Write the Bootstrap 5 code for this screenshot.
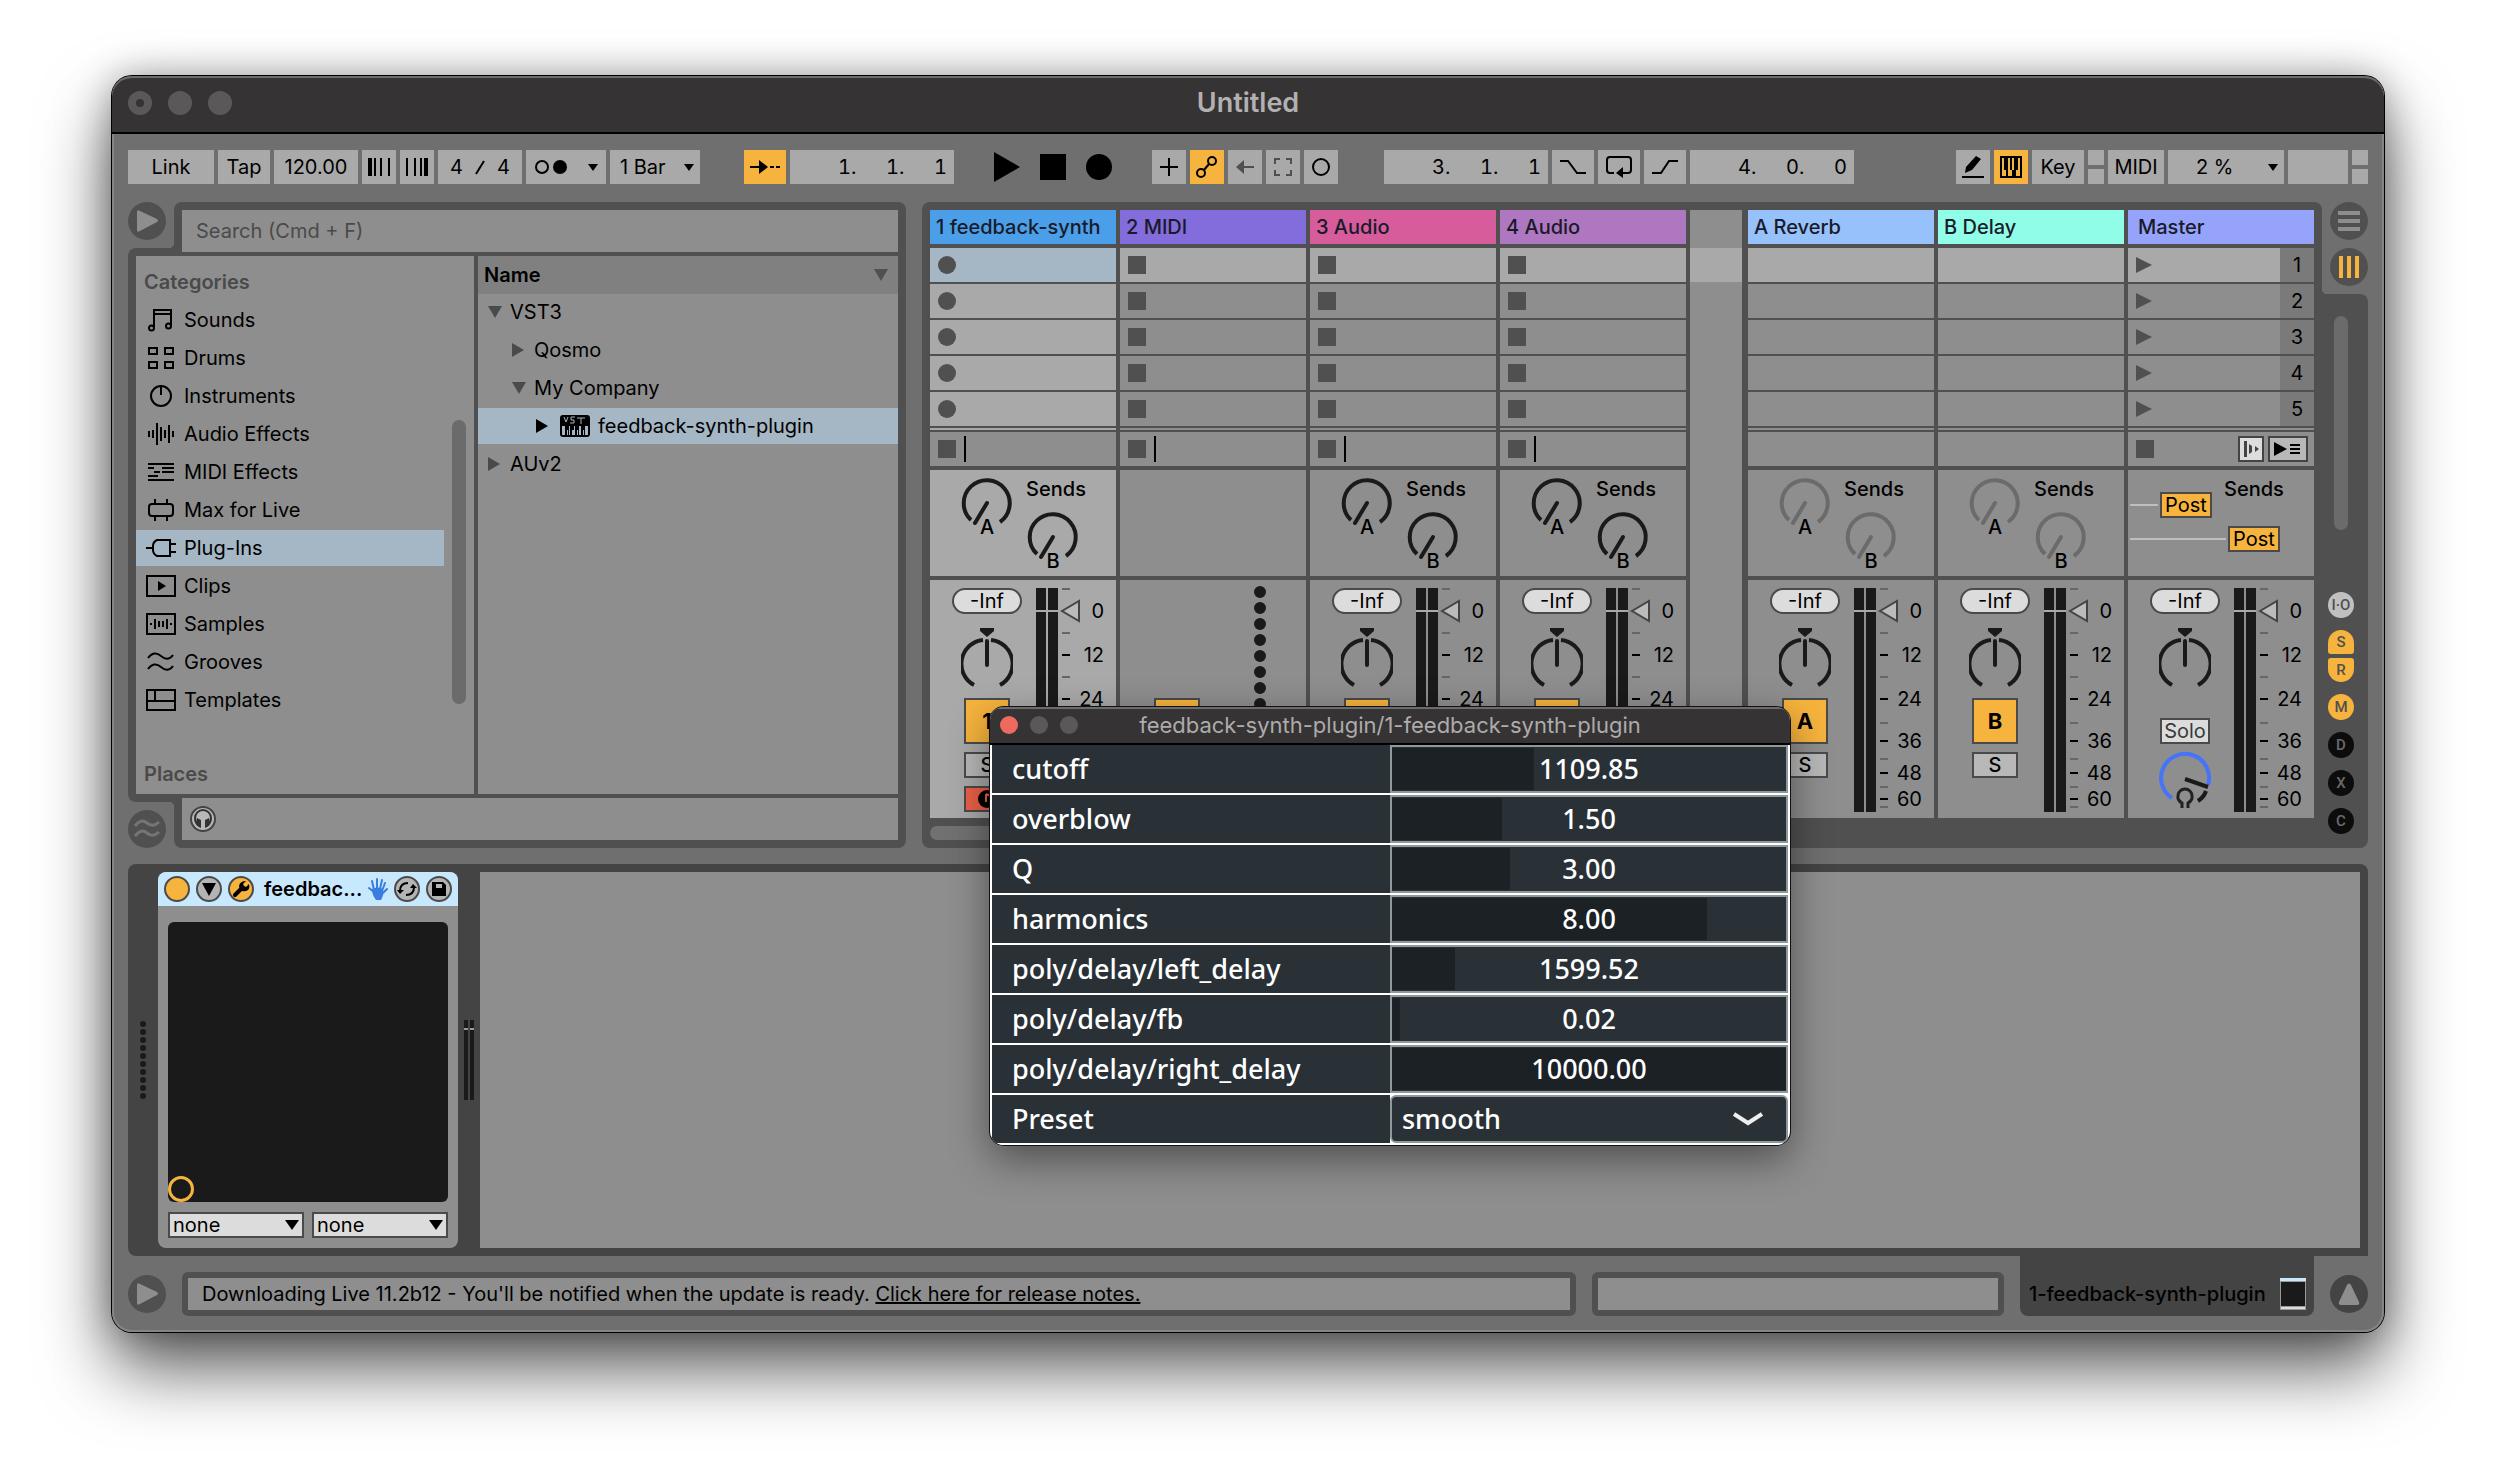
<!DOCTYPE html>
<html lang="en">
<head>
<meta charset="utf-8">
<meta name="viewport" content="width=device-width, initial-scale=1">
<title>Untitled</title>
<link href="https://cdn.jsdelivr.net/npm/bootstrap@5.3.0/dist/css/bootstrap.min.css" rel="stylesheet">
<style>
:root{--chrome:#6f6f6f;--edge:#505050;--edge2:#444;--pane:#8e8e8e;--lite:#a9a9a9;--sel:#a5b6c4;--amber:#f6b33d;--ink:#1a1a1a}
body{background:#fff;font-family:Inter,"Liberation Sans",sans-serif;font-size:20px;line-height:24px;color:#000}
svg{display:block;flex:none}
button,input,select{font:inherit;color:inherit;border:0;border-radius:0;padding:0;appearance:none;background:none;min-width:0}
.stage{padding:76px 112px 148px}
.daw{background:var(--chrome);border-radius:20px;box-shadow:inset 0 0 0 2px #858585,0 0 0 1px #000,0 36px 70px rgba(0,0,0,.65),0 0 36px rgba(0,0,0,.3)}
.titlebar{height:58px;background:#363334;border-bottom:2px solid #000;border-radius:20px 20px 0 0;padding:0 16px 2px;box-shadow:inset 0 2px 0 #6c6c6a;color:#b3b0b1;font-size:27px;font-weight:600;display:grid;grid-template-columns:1fr auto 1fr;align-items:center}
.light{width:24px;height:24px;border-radius:50%;background:#5b5859;display:grid;place-items:center}
.light i{width:8px;height:8px;border-radius:50%;background:#363334}
.toolbar{padding:16px 16px 18px}
.tool{height:34px;background:var(--lite);display:flex;align-items:center;justify-content:center;flex:none}
.hot,.rnd.hot{background:var(--amber)}
.w16{width:16px}.w34{width:34px}.w42{width:42px}.w52{width:52px}.w56{width:56px}.w60{width:60px}.w80{width:80px}.w84{width:84px}.w86{width:86px}.w90{width:90px}.w116{width:116px}
.posbox{width:164px;padding-left:48px;justify-content:flex-start;font-variant-numeric:tabular-nums}
.posbox input{width:48px}.posbox input:last-child{width:18px}
.pick{position:relative}.pick select{width:100%;height:100%;padding:0 10px}
.pick svg{position:absolute;right:6px;pointer-events:none}
.halves{width:16px;height:34px;display:flex;flex-direction:column;gap:4px}.halves i{flex:1;background:var(--lite)}
.disc{width:38px;height:38px;border-radius:50%;background:var(--edge);display:grid;place-items:center}
.browser{width:778px;flex:none}
.sidecell{width:46px;height:46px;flex:none}
.sidecell.top{background:radial-gradient(circle at 0 0,transparent 6px,var(--edge) 7px) 100% 100%/6px 6px no-repeat}
.sidecell.bottom{padding-top:8px;background:radial-gradient(circle at 0 100%,transparent 6px,var(--edge) 7px) 100% 0/6px 6px no-repeat}
.searchwrap{height:46px;padding:8px 8px 0;background:var(--edge);border-radius:8px 8px 0 0}
.searchwrap input{display:block;width:100%;height:42px;background:var(--pane);padding:0 14px;position:relative}
.searchwrap input::placeholder{color:#4a4a4a;opacity:1}
.lists{background:var(--edge);padding:8px;gap:4px;border-radius:8px 0 0 8px}
.cats{width:338px;background:var(--pane);padding:6px 8px 0 0;height:538px}
.head2{color:#4a4a4a;font-weight:600;height:40px;padding-left:8px;display:flex;align-items:center}
.cat{width:308px;height:36px;margin-bottom:2px;padding-left:10px;gap:8px;display:flex;align-items:center;color:#000;text-decoration:none}
.cat.on,.leaf.on{background:var(--sel)}
.cat svg{fill:none;stroke:#000;stroke-width:2}
.vbar{width:14px;border-radius:7px;background:#6b6b6b}
.tree{background:var(--pane)}
.treehead{height:38px;background:#808080;padding:0 10px 0 6px;font-weight:600}
.leaf{height:36px;margin-bottom:2px;display:flex;align-items:center;gap:8px}
.preview{height:46px;background:var(--edge);padding:0 8px 8px;border-radius:0 0 8px 8px}
.preview div{height:42px;margin-top:-4px;background:var(--pane);position:relative;padding:0 8px;display:flex;align-items:center}
.session{background:var(--edge);border-radius:8px 8px 0 8px;padding:8px}
.trk{width:186px;flex:none;display:flex;flex-direction:column}
.thead{height:34px;margin-bottom:4px;padding-left:6px;font-weight:500;color:#1a1a2a;display:flex;align-items:center;white-space:nowrap}
.slot{height:34px;margin-bottom:2px;background:var(--pane);padding-left:8px;display:flex;align-items:center;width:100%}
.slot.lit{background:var(--lite)}.slot.picked{background:var(--sel)}
.sliver{height:2px;margin-bottom:2px;background:var(--pane)}
.stopsq{width:18px;height:18px;background:var(--edge)}.stopsq.dot{border-radius:50%}
.statusline{width:2px;height:26px;background:#000;margin-left:8px}
.sends{height:106px;margin:4px 0;background:var(--pane);display:flex;padding:7px 0 0 31px;gap:9px;font-weight:500}
.trk>.slot.last{margin-bottom:0}
.mixer{height:238px;background:var(--pane);display:flex;padding-left:22px}
.strip{width:70px;display:flex;flex-direction:column;align-items:center;padding-top:8px}
.armed .sends,.armed .mixer,.armed .slot.free,.armed .sliver{background:var(--lite)}
.pill{width:70px;height:26px;border:2px solid #4a4a4a;border-radius:13px;background:#dcdcdc;text-align:center;line-height:22px;margin-bottom:12px}
.sq{width:46px;height:26px;border:2px solid #4a4a4a;background:#b8b8b8;margin-top:8px;line-height:22px;font-weight:500;display:grid;place-items:center}
.sq.big{height:46px;background:var(--amber);font-weight:700;font-size:22px}
.sq.rec{background:#ec6048}
.sq.solo{width:50px;margin-top:28px;background:#dcdcdc;color:#3a3a3a;font-weight:400}
.post{border:2px solid #4a4a4a;background:var(--amber);height:26px;width:52px;line-height:22px;font-weight:400}
.wire{height:2px;background:#bebebe}
.scene{width:34px;height:34px;background:#7a7a7a;display:grid;place-items:center}
.hbar{height:14px;width:756px;margin-top:8px;border-radius:7px;background:#717171}
.rightcol{width:46px;flex:none}
.notch{height:92px;padding-left:8px;gap:8px;background:radial-gradient(circle at 100% 0,transparent 6px,var(--edge) 7px) 0 100%/6px 6px no-repeat}
.railbox{background:var(--edge);border-radius:0 8px 8px 0;padding:22px 0 0 6px}
.railbar{height:214px;margin:0 0 62px 6px}
.tog{width:26px;height:26px;border-radius:50%;margin-bottom:12px;font:500 15px/15px Roboto,sans-serif;background:#0c0c0c;color:#6a6a6a;display:grid;place-items:center}
.tog.am{background:var(--amber);color:#505050}
.tog.half1{height:24px;border-radius:13px 13px 3px 3px;margin-bottom:4px}.tog.half2{height:24px;border-radius:3px 3px 13px 13px}
.devices{margin:16px 16px 0;background:var(--edge2);border-radius:8px 8px 0 8px;padding:8px;height:392px}
.gutter{width:22px}
.dev{width:300px;background:var(--pane);border-radius:8px;overflow:hidden}
.devhead{height:34px;background:#c8e8fe;padding:0 6px;gap:6px;font-weight:600}
.rnd{width:26px;height:26px;border-radius:50%;border:2px solid #4a4a4a;background:#b4b4b4;display:grid;place-items:center;flex:none}
.pad{width:280px;height:280px;margin:16px 10px 10px;background:var(--ink);border-radius:6px;display:flex;align-items:flex-end}
.pad i{width:26px;height:26px;border:3px solid var(--amber);border-radius:50%}
.minis{padding:0 10px}
.mini{width:136px;height:26px;border:2px solid #4a4a4a;background:#dcdcdc;display:flex;align-items:center}
.mini select{padding:0 3px;line-height:20px}.mini svg{right:3px}
.foot{padding:0 16px 16px}
.msg{margin-top:16px;height:44px;border:6px solid var(--edge);border-radius:6px;background:var(--pane);padding:0 14px;display:flex;align-items:center;white-space:pre}
.msg a{color:#000}
.msg.side{width:412px}
.tab{width:294px;height:60px;background:var(--edge2);border-radius:0 0 8px 8px;padding:16px 8px 0 9px;font-weight:500}
.plug{position:absolute;left:878px;top:631px;width:800px;border-radius:14px;overflow:hidden;background:#fff;box-shadow:0 0 0 1px #111,0 14px 40px rgba(0,0,0,.45);font-family:"Noto Sans","Open Sans",sans-serif;font-size:27px;font-weight:500;color:#fff}
.plughead{height:38px;background:#363334;border-bottom:2px solid #000;box-shadow:inset 0 2px 0 #6c6c6a;padding:0 10px;color:#adabac;font:22px/26px Inter,sans-serif;display:grid;grid-template-columns:1fr auto 1fr;align-items:center}
.plughead .light{width:18px;height:18px}
.prow{height:50px;padding:0 2px;border-bottom:2px solid #fff}
.prow>label{width:50%;background:#293137;padding-left:20px;display:flex;align-items:center;height:48px}
.val{width:50%;height:48px;position:relative;display:grid;place-items:center;border:2px solid #8f989b;background:#293137}
.val input{position:absolute;inset:1px 0;width:100%;height:42px;background:linear-gradient(#1c2125,#1c2125) 0 0/var(--p) 100% no-repeat}
.val input::-webkit-slider-thumb{appearance:none;width:1px;height:40px;background:none}
.val output{position:relative;pointer-events:none}
.val select{width:100%;height:44px;padding:0 10px}
.val.sel{border-radius:6px}.val.sel svg{position:absolute;right:22px;pointer-events:none}
</style>
</head>
<body>
<div class="stage">
<main class="daw position-relative">
  <header class="titlebar">
    <div class="d-flex gap-3"><span class="light"><i></i></span><span class="light"></span><span class="light"></span></div>
    <span>Untitled</span><span></span>
  </header>

  <div class="toolbar d-flex">
    <div class="d-flex gap-1">
      <button class="tool w86">Link</button><button class="tool w52">Tap</button>
      <input class="tool w84 text-center" value="120.00" aria-label="Tempo">
      <button class="tool w34" aria-label="Nudge down"><svg width="22" height="18"><path d="M0 0h4v18H0zM6 0h2v18H6zM12 0h2v18h-2zM20 0h2v18h-2z"/></svg></button>
      <button class="tool w34" aria-label="Nudge up"><svg width="22" height="18"><path d="M18 0h4v18h-4zM14 0h2v18h-2zM8 0h2v18H8zM0 0h2v18H0z"/></svg></button>
      <button class="tool w84 gap-2"><span>4</span><svg width="18" height="18"><path d="M13 3 5 16" stroke="#000" stroke-width="2"/></svg><span>4</span></button>
      <button class="tool w80" style="gap:20px" aria-label="Metronome"><svg width="34" height="18"><circle cx="8" cy="9" r="6" fill="none" stroke="#000" stroke-width="2"/><circle cx="26" cy="9" r="7"/></svg><svg width="10" height="8"><path d="M0 1h10L5 8z"/></svg></button>
      <div class="tool w90 pick"><select aria-label="Quantization"><option>1 Bar</option></select><svg width="10" height="8"><path d="M0 1h10L5 8z"/></svg></div>
    </div>
    <div class="d-flex gap-1" style="margin-left:44px">
      <button class="tool hot w42" aria-label="Follow"><svg width="30" height="18"><path d="M0 8h9V2l9 7-9 7v-6H0zM20 8h4v2h-4zM26 8h4v2h-4z"/></svg></button>
      <div class="tool posbox"><input value="1." aria-label="Bar"><input value="1." aria-label="Beat"><input value="1" aria-label="Sixteenth"></div>
    </div>
    <div class="d-flex mx-4 px-3 align-items-center" style="gap:20px">
      <button aria-label="Play"><svg width="26" height="30"><path d="M0 0l26 15L0 30z"/></svg></button>
      <button aria-label="Stop"><svg width="26" height="26"><path d="M0 0h26v26H0z"/></svg></button>
      <button aria-label="Record"><svg width="26" height="26"><circle cx="13" cy="13" r="13"/></svg></button>
    </div>
    <div class="d-flex gap-1">
      <button class="tool w34" aria-label="Overdub"><svg width="18" height="18"><path d="M8 0h2v8h8v2h-8v8H8v-8H0V8h8z"/></svg></button>
      <button class="tool hot w34" aria-label="Automation arm"><svg width="24" height="24" fill="none" stroke="#000" stroke-width="2"><circle cx="17" cy="6" r="4"/><circle cx="6" cy="18" r="4"/><path d="M9 15l5-6"/></svg></button>
      <button class="tool w34" aria-label="Re-enable automation"><svg width="18" height="14" fill="#505050"><path d="M0 7l8-7v6h10v2H8v6z"/></svg></button>
      <button class="tool w34" aria-label="Capture"><svg width="18" height="18" fill="none" stroke="#505050" stroke-width="2"><path d="M6 1H1v5M12 1h5v5M6 17H1v-5M12 17h5v-5"/></svg></button>
      <button class="tool w34" aria-label="Session record"><svg width="20" height="20"><circle cx="10" cy="10" r="8" fill="none" stroke="#000" stroke-width="2"/></svg></button>
    </div>
    <div class="d-flex gap-1" style="margin-left:46px">
      <div class="tool posbox"><input value="3." aria-label="Loop bar"><input value="1." aria-label="Loop beat"><input value="1" aria-label="Loop sixteenth"></div>
      <button class="tool w42" aria-label="Punch in"><svg width="26" height="16" fill="none" stroke="#000" stroke-width="2"><path d="M0 2h8l9 12h9"/></svg></button>
      <button class="tool w42" aria-label="Loop"><svg width="28" height="26" fill="none" stroke="#000" stroke-width="2"><path d="M9 19H5q-3 0-3-3V6q0-3 3-3h18q3 0 3 3v10q0 3-3 3h-5"/><path d="M18 13v11l-7-5z" fill="#000" stroke="none"/></svg></button>
      <button class="tool w42" aria-label="Punch out"><svg width="26" height="16" fill="none" stroke="#000" stroke-width="2"><path d="M0 14h9l8-12h9"/></svg></button>
      <div class="tool posbox"><input value="4." aria-label="Length bars"><input value="0." aria-label="Length beats"><input value="0" aria-label="Length sixteenths"></div>
    </div>
    <div class="d-flex gap-1 ms-auto">
      <button class="tool w34" aria-label="Draw"><svg width="22" height="22"><path d="M0 20h22v2H0zM3 17l1-6L14 0l5 3-9 11z"/></svg></button>
      <button class="tool hot w34" aria-label="Computer keyboard"><svg width="22" height="22"><path d="M0 0h22v22H0z"/><path d="M2 2h2v12h2v6H2zM8 2h2v12h2V2h2v12h-2v6h-4v-6H8zM18 2h2v18h-4v-6h2z" fill="#f6b33d"/><path d="M7 14h1v6H7zM14 14h1v6h-1z"/></svg></button>
      <button class="tool w52">Key</button><span class="halves"><i></i><i></i></span><button class="tool w56">MIDI</button>
      <div class="tool w116 pick"><select class="ps-4 ms-1" aria-label="CPU meter"><option>2 %</option></select><svg width="10" height="8"><path d="M0 1h10L5 8z"/></svg></div>
      <span class="tool w60"></span><span class="halves"><i></i><i></i></span>
    </div>
  </div>

  <div class="d-flex gap-3 px-3">
    <section class="browser">
      <div class="d-flex">
        <div class="sidecell top"><button class="disc" aria-label="Hide browser"><svg width="24" height="24"><path d="M2 3q0-3 3-1l17 8q2 2 0 3L5 22q-3 2-3-1z" fill="#8e8e8e"/></svg></button></div>
        <div class="searchwrap flex-fill"><input type="search" placeholder="Search (Cmd + F)" aria-label="Search"></div>
      </div>
      <div class="lists d-flex">
        <div class="cats d-flex">
          <nav class="d-flex flex-column h-100">
            <div class="head2">Categories</div>
            <a class="cat" href="#"><svg width="30" height="24"><path d="M8 19V2h17v15M8 6h17"/><circle cx="5.500" cy="20" r="2.500"/><circle cx="22.500" cy="18" r="2.500"/></svg>Sounds</a>
            <a class="cat" href="#"><svg width="30" height="24"><path d="M3 2h8v6H3zM19 2h8v6h-8zM3 16h8v6H3zM19 16h8v6h-8z"/></svg>Drums</a>
            <a class="cat" href="#"><svg width="30" height="24"><circle cx="15" cy="12" r="10"/><path d="M15 1v10"/></svg>Instruments</a>
            <a class="cat" href="#"><svg width="30" height="24"><path d="M3 9v6M7 8v8M11 1v22M15 5v14M19 8v8M23 3v18M27 9v6"/></svg>Audio Effects</a>
            <a class="cat" href="#"><svg width="30" height="24"><path d="M2 4h26M2 8h6M16 8h12M8 12h6M16 12h12M2 16h10M2 20h26"/></svg>MIDI Effects</a>
            <a class="cat" href="#"><svg width="30" height="24"><rect x="3" y="6" width="24" height="12" rx="3"/><path d="M9 1v5M21 1v5M9 18v5M21 18v5"/></svg>Max for Live</a>
            <a class="cat on" href="#"><svg width="30" height="24"><path d="M0 12h7M24 4H11Q7 6 7 10v4q0 4 4 6h13zM24 8h6M24 16h6"/></svg>Plug-Ins</a>
            <a class="cat" href="#"><svg width="30" height="24"><path d="M1 2h28v20H1z"/><path d="M12 7l8 5-8 5z" fill="#000" stroke="none"/></svg>Clips</a>
            <a class="cat" href="#"><svg width="30" height="24"><path d="M1 2h28v20H1zM5 11v2M9 7v10M13 9v6M17 9v6M21 7v10M25 11v2"/></svg>Samples</a>
            <a class="cat" href="#"><svg width="30" height="24"><path d="M2 8q6-8 13-2t12-1M2 19q6-8 13-2t12-1"/></svg>Grooves</a>
            <a class="cat" href="#"><svg width="30" height="24"><path d="M1 2h28v20H1zM1 13h28M9 2v11"/></svg>Templates</a>
            <div class="head2 mt-auto">Places</div>
          </nav>
          <div class="d-flex flex-column ms-2"><div class="vbar" style="height:284px;margin-top:158px"></div></div>
        </div>
        <div class="tree flex-fill">
          <div class="treehead d-flex align-items-center justify-content-between"><span>Name</span><svg width="14" height="12" fill="#505050"><path d="M0 0h14L7 12z"/></svg></div>
          <div class="leaf" style="padding-left:10px"><svg width="14" height="12" fill="#4a4a4a"><path d="M0 0h14L7 12z"/></svg>VST3</div>
          <div class="leaf" style="padding-left:34px"><svg width="14" height="14" fill="#4a4a4a"><path d="M0 0l12 7-12 7z"/></svg>Qosmo</div>
          <div class="leaf" style="padding-left:34px"><svg width="14" height="12" fill="#4a4a4a"><path d="M0 0h14L7 12z"/></svg>My Company</div>
          <div class="leaf on" style="padding-left:58px"><svg width="16" height="14"><path d="M0 0l12 7-12 7z"/></svg><svg width="30" height="22"><rect width="30" height="22" rx="3"/><path d="M2 11h3v9H2zM7 15h1v5H7zM9 11h1v9H9zM12 15h3v5h-3zM14 11h1v5h-1zM17 15h1v5h-1zM19 11h2v9h-2zM23 15h1v5h-1zM25 11h3v9h-3z" fill="#a5b6c4"/><path d="M4 2l2 5 2-5M15 2h-4v3h3v3h-4M17 3h8M21 3v6" fill="none" stroke="#a5b6c4" stroke-width="1"/></svg>feedback-synth-plugin</div>
          <div class="leaf" style="padding-left:10px"><svg width="14" height="14" fill="#4a4a4a"><path d="M0 0l12 7-12 7z"/></svg>AUv2</div>
        </div>
      </div>
      <div class="d-flex">
        <div class="sidecell bottom"><button class="disc" aria-label="Groove pool"><svg width="26" height="20" fill="none" stroke="#757575" stroke-width="3"><path d="M1 7q6-8 12-3t12-1M1 17q6-8 12-3t12-1"/></svg></button></div>
        <div class="preview flex-fill"><div><button aria-label="Preview"><svg width="26" height="26"><circle cx="13" cy="13" r="12" fill="#b8b8b8" stroke="#444" stroke-width="2"/><path d="M9 20q-4-3-4-8a8 8 0 0116 0q0 5-4 8" fill="none" stroke="#333" stroke-width="2"/><path d="M7 12l4 2v8q-5-2-5-6zM19 12l-4 2v8q5-2 5-6z" fill="#333"/></svg></button></div></div>
      </div>
    </section>

    <div class="d-flex flex-fill">
      <section class="session flex-fill">
        <div class="d-flex gap-1" id="tracks"></div>
        <div class="hbar"></div>
      </section>
      <aside class="rightcol d-flex flex-column">
        <div class="notch d-flex flex-column">
          <button class="disc" aria-label="Arrangement view"><svg width="22" height="20" fill="#8e8e8e"><path d="M0 0h22v4H0zM0 8h22v4H0zM0 16h22v4H0z"/></svg></button>
          <button class="disc" aria-label="Session view"><svg width="20" height="22" fill="#f6b33d"><path d="M0 0h4v22H0zM8 0h4v22H8zM16 0h4v22h-4z"/></svg></button>
        </div>
        <div class="railbox flex-fill">
          <div class="vbar railbar"></div>
          <button class="tog" style="background:#c0c0c0;color:#505050">I·O</button>
          <button class="tog am half1">S</button><button class="tog am half2">R</button>
          <button class="tog am">M</button><button class="tog">D</button><button class="tog">X</button><button class="tog mb-0">C</button>
        </div>
      </aside>
    </div>
  </div>

  <section class="devices d-flex">
    <div class="gutter d-flex align-items-center ps-1"><svg width="6" height="78"><path d="M3 3v73" stroke="#1a1a1a" stroke-width="6" stroke-linecap="round" stroke-dasharray="0 8"/></svg></div>
    <article class="dev">
      <div class="devhead d-flex align-items-center">
        <button class="rnd hot" aria-label="Device on"></button>
        <button class="rnd" aria-label="Fold"><svg width="14" height="13"><path d="M0 0h14L7 13z"/></svg></button>
        <button class="rnd hot" aria-label="Show plug-in window"><svg width="18" height="18"><path d="M3 15l7-7" stroke="#000" stroke-width="4" stroke-linecap="round"/><path d="M14 1l-3 3 1 2 2 1 3-3q1 4-1 6-3 2-6 1-3-2-3-5 1-5 7-5z"/></svg></button>
        <span class="flex-fill ms-1">feedbac...</span>
        <svg width="20" height="22" fill="#3a7de0" stroke="#3a7de0"><path d="M6 14L1 10M6 12L4 3M9 11V1M12 11l2-9M14 13l3-8M14 16l5-5" stroke-width="2" stroke-linecap="round"/><path d="M4 11q6-3 11 0 1 6-2 11H8q-4-5-4-11z" stroke="none"/></svg>
        <button class="rnd" aria-label="Hot-swap"><svg width="20" height="16" fill="none" stroke="#000" stroke-width="2"><path d="M3 10q0-8 8-8M17 6q0 8-8 8"/><path d="M0 9h7l-4 4zM13 7h7l-4-4z" fill="#000" stroke="none"/></svg></button>
        <button class="rnd" aria-label="Save preset"><svg width="14" height="14"><path d="M0 0h11l3 3v11H0z"/><path d="M4 2h6v4H4z" fill="#b4b4b4"/></svg></button>
      </div>
      <div class="pad"><i></i></div>
      <div class="minis d-flex gap-2">
        <div class="mini pick"><select aria-label="X parameter"><option>none</option></select><svg width="14" height="10"><path d="M0 0h14L7 10z"/></svg></div>
        <div class="mini pick"><select aria-label="Y parameter"><option>none</option></select><svg width="14" height="10"><path d="M0 0h14L7 10z"/></svg></div>
      </div>
    </article>
    <div class="gutter d-flex align-items-center justify-content-center"><svg width="10" height="80"><path d="M0 0h4v80H0zM6 0h4v80H6z" fill="#1a1a1a"/><path d="M0 8h4v2H0zM6 8h4v2H6z" fill="#999"/></svg></div>
    <div class="flex-fill" style="background:var(--pane)"></div>
  </section>

  <footer class="foot d-flex gap-3">
    <button class="disc mt-3 align-self-center" aria-label="Info view"><svg width="24" height="24"><path d="M2 3q0-3 3-1l17 8q2 2 0 3L5 22q-3 2-3-1z" fill="#8e8e8e"/></svg></button>
    <div class="msg flex-fill">Downloading Live 11.2b12 - You'll be notified when the update is ready. <a href="#">Click here for release notes.</a></div>
    <div class="msg side"></div>
    <div class="tab d-flex align-items-center justify-content-between"><span>1-feedback-synth-plugin</span><svg width="26" height="32"><path d="M0 0h26v32H0z" fill="#999"/><path d="M0 0h26v3H0z" fill="#c8e8fe"/><path d="M1 4h24v24H1z" fill="#1a1a1a"/><path d="M1 29h24v2H1z" fill="#ddd"/></svg></div>
    <button class="disc mt-3 align-self-center" aria-label="Detail view" style="background:var(--edge2)"><svg width="24" height="24"><path d="M10 3q2-3 4 0l8 17q1 3-2 3H4q-3 0-2-3z" fill="#8e8e8e"/></svg></button>
  </footer>

  <section class="plug">
    <div class="plughead"><div class="d-flex" style="gap:12px"><span class="light" style="background:#ee6a5f"></span><span class="light"></span><span class="light"></span></div><span>feedback-synth-plugin/1-feedback-synth-plugin</span><span></span></div>
    <div id="params"></div>
    <div class="prow d-flex"><label for="preset">Preset</label><div class="val sel"><select id="preset"><option>smooth</option></select><svg width="32" height="16" fill="none" stroke="#eee" stroke-width="4"><path d="M2 3l14 9 14-9"/></svg></div></div>
  </section>
</main>
</div>
<script src="https://cdn.jsdelivr.net/npm/bootstrap@5.3.0/dist/js/bootstrap.bundle.min.js"></script>
<script>
const knob = (l, c) => `<svg width="52" height="62" fill="none" stroke="${c}" stroke-width="4"><path d="M10 43A23 23 0 1 1 39 45"/><path d="M26 26L14 46" stroke-linecap="round"/><text x="26" y="57" text-anchor="middle" fill="#000" stroke="none">${l}</text></svg>`;
const sends = c => `<div class="sends">${knob('A', c)}<div><div class="text-center lh-1" style="height:34px;width:68px;padding-top:2px">Sends</div><div style="padding-left:5px">${knob('B', c)}</div></div></div>`;
const pan = `<svg width="52" height="64" fill="none" stroke="#1a1a1a" stroke-width="4"><path d="M22 14A24 24 0 0 0 13 59M30 14A24 24 0 0 1 39 59"/><path d="M26 15v24" stroke-linecap="round"/><path d="M19 2h14v3l-7 6-7-6z" fill="#1a1a1a" stroke="none"/></svg>`;
const marks = [[31, 0], [75, 12], [119, 24], [161, 36], [193, 48], [219, 60]];
const fader = n => `<svg class="ms-auto" width="82" height="238"><path d="M2 8h10v224H2zM14 8h10v224H14z" fill="#1a1a1a"/><path d="M2 31h22" stroke="#aaa" stroke-width="2"/><path d="M28 31l17-10v20z" fill="#bbb" stroke="#444" stroke-width="2"/><path d="M28 9h8M28 53h8M28 97h8M28 143h8M28 179h8M28 207h8M28 227h8" stroke="#666" stroke-width="2"/>${marks.slice(0, n).map(([y, v]) => (v ? `<path d="M28 ${y}h8" stroke="#000" stroke-width="2"/>` : '') + `<text x="70" y="${y + 7}" text-anchor="end">${v}</text>`).join('')}</svg>`;
const dots = `<svg style="margin-left:42px" width="12" height="238"><path d="M6 18v218" stroke="#1a1a1a" stroke-width="12" stroke-linecap="round" stroke-dasharray="0 16" transform="translate(0 -6)"/></svg>`;
const tri = `<svg width="16" height="18" fill="#505050"><path d="M0 1l16 8-16 8z"/></svg>`;
const list = [
  {n: '1 feedback-synth', c: '#4a9fe8', t: 'audio', b: '1', s: 'S', armed: 1},
  {n: '2 MIDI', c: '#836cdb', t: 'midi'},
  {n: '3 Audio', c: '#d65c9c', t: 'audio'},
  {n: '4 Audio', c: '#ae77c0', t: 'audio'},
  {t: 'gap'},
  {n: 'A Reverb', c: '#96c1fa', t: 'ret', b: 'A', s: 'S'},
  {n: 'B Delay', c: '#8ffde8', t: 'ret', b: 'B', s: 'S'},
  {n: 'Master', c: '#95a3fa', t: 'master'}
];
const slot = (k, i) => {
  const cls = i === 0 ? (k.armed ? 'picked' : 'lit') : 'free';
  if (k.t === 'ret') return `<div class="slot ${cls}"></div>`;
  if (k.t === 'master') return `<div class="slot ${cls}"><button aria-label="Launch scene">${tri}</button><span class="scene ms-auto">${i + 1}</span></div>`;
  return `<button class="slot ${cls}" aria-label="Clip slot"><span class="stopsq ${k.armed ? 'dot' : ''}"></span></button>`;
};
document.getElementById('tracks').innerHTML = list.map(k => {
  if (k.t === 'gap') return `<div class="flex-fill" style="background:var(--pane);margin-right:2px"><div style="height:34px;margin-top:38px;background:var(--lite)"></div></div>`;
  let stop = '', body = sends(k.t === 'ret' ? '#6b6b6b' : '#1a1a1a');
  if (k.t === 'audio' || k.t === 'midi') stop = '<span class="stopsq"></span><span class="statusline"></span>';
  if (k.t === 'master') {
    stop = '<span class="stopsq"></span><button class="ms-auto" aria-label="Back"><svg width="26" height="26"><path d="M1 1h24v24H1z" fill="#ddd" stroke="#444" stroke-width="2"/><path d="M6 5h3v16H6zM11 8l3 2v6l-3 2zM17 10l4 3-4 3z" fill="#444"/></svg></button><button style="margin:0 6px 0 4px" aria-label="Follow"><svg width="40" height="26"><path d="M1 1h38v24H1z" fill="#b8b8b8" stroke="#444" stroke-width="2"/><path d="M6 6l13 7-13 7zM22 8h10v2H22zM22 12h10v2H22zM22 16h10v2H22z"/></svg></button>';
    body = '<div class="sends d-block p-0"><div class="lh-1" style="padding:9px 0 0 96px;height:22px">Sends</div><div class="d-flex align-items-center" style="padding-left:2px"><div class="wire" style="width:28px"></div><button class="post" style="margin-left:2px">Post</button></div><div class="d-flex align-items-center mt-2" style="padding-left:2px"><div class="wire" style="width:96px"></div><button class="post" style="margin-left:2px">Post</button></div></div>';
  }
  if (k.t === 'midi') body = '<div class="sends"></div>';
  const mid = k.t === 'midi';
  const low = k.t === 'master'
    ? `<button class="sq solo">Solo</button><svg style="margin-top:7px" width="56" height="60" fill="none" stroke-width="4"><path d="M15 47A24 24 0 1 1 51 34" stroke="#4573fa"/><path d="M49 40q-2 6-8 10M28 28l23 8" stroke="#1a1a1a"/><path d="M25 57v-5q-5-3-4-7a7 7 0 0114 0q1 4-4 7v5" stroke="#222" stroke-width="3"/></svg>`
    : `<button class="sq big" aria-label="Track on">${k.b || ''}</button><button class="sq" aria-label="Solo">${k.s || ''}</button>${k.t === 'ret' ? '' : '<button class="sq rec" aria-label="Arm"><svg width="18" height="18"><circle cx="9" cy="9" r="9"/><path d="M8 4v8M8 4l5 2" stroke="#ec6048" stroke-width="2"/></svg></button>'}`;
  return `<div class="trk ${k.armed ? 'armed' : ''}"><div class="thead" style="background:${k.c};${k.t === 'master' ? 'padding-left:10px' : ''}">${k.n}</div>${[0, 1, 2, 3, 4].map(i => slot(k, i)).join('')}<div class="sliver"></div><div class="slot last">${stop}</div>${body}<div class="mixer"><div class="strip">${mid ? '<div style="height:102px"></div>' : `<div class="pill">-Inf</div>${pan}`}${low}</div>${mid ? dots : fader(k.t === 'audio' ? 3 : 6)}</div></div>`;
}).join('');
const params = [['cutoff', '1109.85', 36], ['overblow', '1.50', 28], ['Q', '3.00', 30], ['harmonics', '8.00', 80], ['poly/delay/left_delay', '1599.52', 16], ['poly/delay/fb', '0.02', 2], ['poly/delay/right_delay', '10000.00', 100]];
document.getElementById('params').innerHTML = params.map(([n, v, p], i) => `<div class="prow d-flex"><label for="p${i}">${n}</label><div class="val"><input type="range" id="p${i}" value="${p}" style="--p:${p}%"><output for="p${i}">${v}</output></div></div>`).join('');
</script>
</body>
</html>
